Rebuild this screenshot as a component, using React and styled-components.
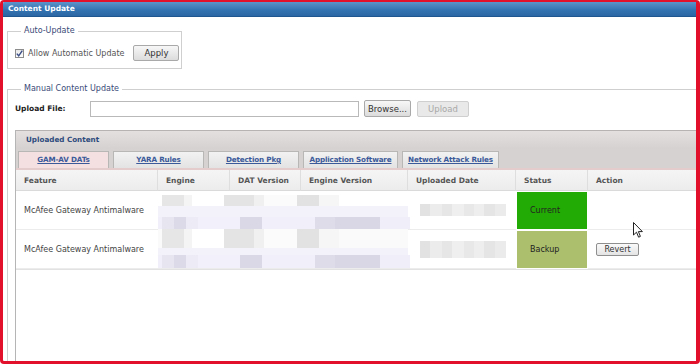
import React from 'react';
import styled, { createGlobalStyle } from 'styled-components';

const GlobalStyle = createGlobalStyle`
  html, body {
    margin: 0;
    padding: 0;
    background: #fff;
  }
  body {
    font-family: "DejaVu Sans", Verdana, sans-serif;
    font-size: 8px;
    color: #444;
  }
`;

const columns = [
  { title: 'Feature', width: 142 },
  { title: 'Engine', width: 72 },
  { title: 'DAT Version', width: 71 },
  { title: 'Engine Version', width: 107 },
  { title: 'Uploaded Date', width: 108 },
  { title: 'Status', width: 72 },
  { title: 'Action', width: 120 },
];

const tabs = ['GAM-AV DATs', 'YARA Rules', 'Detection Pkg', 'Application Software', 'Network Attack Rules'];

const rows = [
  { feature: 'McAfee Gateway Antimalware', status: 'Current', action: null },
  { feature: 'McAfee Gateway Antimalware', status: 'Backup', action: 'Revert' },
];

function Smudge({ top }) {
  return (
    <SmudgeWrap>
      <SmudgeLine $h={top ? 11 : 19} $bg={top ? '#fff' : '#fafafa'}>
        <Pix $w={22} $c="#e6e6e6" $ml={4} />
        <Pix $w={8} $c="#f4f4f4" />
        <Pix $w={32} $c="#fff" />
        <Pix $w={30} $c="#e4e4e4" />
        <Pix $w={10} $c="#f0f0f0" />
        <Pix $w={33} $c="#fbfbfb" />
        <Pix $w={22} $c="#e2e2e2" />
        <Pix $w={20} $c="#f6f6f6" />
      </SmudgeLine>
      <SmudgeLine $h={top ? 11 : 7} $bg="#f3f2fb">
        <Pix $w={250} $c="#f3f2fb" />
      </SmudgeLine>
      <SmudgeLine $h={top ? 12 : 13} $bg="#f1f0fa">
        <Pix $w={12} $c="#e6e5f0" $ml={4} />
        <Pix $w={12} $c="#dcdae8" />
        <Pix $w={12} $c="#ecebf6" />
        <Pix $w={42} $c="#f2f1fb" />
        <Pix $w={22} $c="#dad8e7" />
        <Pix $w={53} $c="#f0effa" />
        <Pix $w={20} $c="#dedce9" />
        <Pix $w={45} $c="#d9d7e6" />
        <Pix $w={30} $c="#efeef9" />
      </SmudgeLine>
    </SmudgeWrap>
  );
}

function DateSmudge({ tall }) {
  return (
    <DateBar $h={tall ? 17 : 12}>
      <Pix $w={10} $c="#e2e2e2" />
      <Pix $w={12} $c="#ececec" />
      <Pix $w={10} $c="#e6e6e6" />
      <Pix $w={12} $c="#efefef" />
      <Pix $w={10} $c="#e8e8e8" />
      <Pix $w={10} $c="#eeeeee" />
      <Pix $w={11} $c="#e5e5e5" />
      <Pix $w={11} $c="#ebebeb" />
    </DateBar>
  );
}

export default function App() {
  return (
    <>
      <GlobalStyle />
      <Frame>
        <TitleBar>Content Update</TitleBar>
        <Body>
          <AutoSet>
            <Legend>Auto-Update</Legend>
            <AutoRow>
              <Check>
                <svg width="9" height="9" viewBox="0 0 9 9">
                  <path d="M1.8 4.6 L3.7 6.8 L7.3 1.6" fill="none" stroke="#3c4f86" strokeWidth="1.4" />
                </svg>
              </Check>
              <span>Allow Automatic Update</span>
              <Button $w={46}>Apply</Button>
            </AutoRow>
          </AutoSet>

          <ManualSet>
            <Legend>Manual Content Update</Legend>
            <UploadRow>
              <Label>Upload File:</Label>
              <FileInput />
              <Button $w={47} $h={17}>Browse...</Button>
              <Button $w={52} $ml={6} disabled>Upload</Button>
            </UploadRow>

            <Panel>
              <PanelHead>Uploaded Content</PanelHead>
              <TabStrip>
                {tabs.map((t, i) => (
                  <Tab key={t} $active={i === 0} $w={i === 3 ? 95 : i === 4 ? 97 : 91}>
                    {t}
                  </Tab>
                ))}
              </TabStrip>
              <TabRule />
              <Grid>
                {columns.map((c) => (
                  <HeadCell key={c.title}>{c.title}</HeadCell>
                ))}
                {rows.map((r, i) => (
                  <React.Fragment key={i}>
                    <Cell>{r.feature}</Cell>
                    <SpanCell>
                      <Smudge top={i === 0} />
                    </SpanCell>
                    <Cell $pad={12}>
                      <DateSmudge tall={i === 1} />
                    </Cell>
                    <StatusCell $status={r.status}>{r.status}</StatusCell>
                    <Cell>{r.action && <SmallButton>{r.action}</SmallButton>}</Cell>
                  </React.Fragment>
                ))}
              </Grid>
            </Panel>
          </ManualSet>
        </Body>
        <Cursor width="11" height="17" viewBox="0 0 11 17">
          <path d="M0.5 0.5 L0.5 13 L3.5 10.2 L5.6 15.2 L7.4 14.4 L5.4 9.6 L9.4 9.6 Z" fill="#fff" stroke="#222" strokeWidth="1" strokeLinejoin="round" />
        </Cursor>
      </Frame>
    </>
  );
}

const Frame = styled.div`
  position: relative;
  width: 700px;
  height: 364px;
  box-sizing: border-box;
  border: 3px solid #e3102b;
  border-top-width: 2px;
  border-right-width: 4px;
  border-radius: 4px;
  overflow: hidden;
  background: #fff;
`;

const TitleBar = styled.div`
  height: 14px;
  line-height: 13px;
  padding-left: 5px;
  background: linear-gradient(#5d93c9, #3474b3 55%, #2a66a3);
  border-bottom: 1px solid #1f5790;
  color: #fff;
  font-weight: bold;
  font-size: 7.5px;
`;

const Body = styled.div`
  padding: 9px 0 0 4px;
`;

const Legend = styled.legend`
  margin-left: 6px;
  padding: 0 3px;
  color: #3a4a78;
  font-size: 8px;
  line-height: 10px;
`;

const AutoSet = styled.fieldset`
  width: 175px;
  height: 43px;
  box-sizing: border-box;
  margin: 0;
  padding: 0 0 0 7px;
  border: 1px solid #cfcfcf;
`;

const AutoRow = styled.div`
  display: flex;
  align-items: center;
  gap: 4px;
  margin-top: 9px;
  color: #555;
`;

const Check = styled.span`
  display: flex;
  width: 9px;
  height: 9px;
  box-sizing: border-box;
  border: 1px solid #8c8c8c;
  background: linear-gradient(#e8e8e8, #fdfdfd);
  svg {
    margin: -1px;
  }
`;

const Button = styled.button`
  width: ${(p) => p.$w}px;
  height: ${(p) => p.$h || 16}px;
  margin-left: ${(p) => p.$ml || 5}px;
  padding: 0;
  box-sizing: border-box;
  border: 1px solid ${(p) => (p.disabled ? '#cfcfcf' : '#a9a9a9')};
  border-radius: 2px;
  background: ${(p) => (p.disabled ? '#e9e9e9' : 'linear-gradient(#f7f7f7, #dcdcdc)')};
  color: ${(p) => (p.disabled ? '#a8a8a8' : '#333')};
  font-family: inherit;
  font-size: 8.5px;
`;

const ManualSet = styled.fieldset`
  margin: 15px -20px 0 0;
  padding: 0 0 0 7px;
  height: 300px;
  border: 1px solid #cfcfcf;
`;

const UploadRow = styled.div`
  display: flex;
  align-items: center;
  margin-top: 6px;
  height: 17px;
`;

const Label = styled.span`
  width: 75px;
  color: #222;
  font-weight: 600;
  font-size: 7.5px;
`;

const FileInput = styled.div`
  width: 269px;
  height: 16px;
  box-sizing: border-box;
  border: 1px solid #b9b9b9;
  background: #fff;
`;

const Panel = styled.div`
  margin-top: 13px;
  min-height: 260px;
  border-left: 1px solid #b5b5b5;
`;

const PanelHead = styled.div`
  height: 18px;
  line-height: 18px;
  padding-left: 10px;
  border-top: 1px solid #b8b3b3;
  background: linear-gradient(#e4e0e0, #d6d1d1);
  color: #2d4b7c;
  font-weight: bold;
  font-size: 7.2px;
`;

const TabStrip = styled.div`
  display: flex;
  gap: 4px;
  padding: 2px 0 0 2px;
  background: #d7d2d2;
`;

const Tab = styled.div`
  width: ${(p) => p.$w}px;
  height: 17px;
  box-sizing: border-box;
  border: 1px solid #b9b6b6;
  border-bottom: none;
  background: ${(p) => (p.$active ? '#f4e0e0' : 'linear-gradient(#f2f2f2, #e3e3e3)')};
  color: #3b5a9a;
  font-weight: bold;
  font-size: 7.2px;
  letter-spacing: -0.15px;
  line-height: 16px;
  text-align: center;
  text-decoration: underline;
  white-space: nowrap;
`;

const TabRule = styled.div`
  height: 2px;
  background: #e5cccc;
`;

const Grid = styled.div`
  display: grid;
  grid-template-columns: ${columns.map((c) => `${c.width}px`).join(' ')};
  grid-auto-rows: 39px;
  grid-template-rows: 21px;
  border-bottom: 1px solid #e2e2e2;
`;

const HeadCell = styled.div`
  display: flex;
  align-items: center;
  padding-left: 8px;
  border-right: 1px solid #dedede;
  border-bottom: 1px solid #dadada;
  background: linear-gradient(#f5f5f5, #ececec);
  color: #555;
  font-weight: bold;
  font-size: 7.5px;
`;

const Cell = styled.div`
  display: flex;
  align-items: center;
  padding-left: ${(p) => p.$pad ?? 8}px;
  border-bottom: 1px solid #ececec;
  color: #444;
`;

const SpanCell = styled.div`
  grid-column: span 3;
  display: flex;
  align-items: flex-end;
  border-bottom: 1px solid #ececec;
`;

const SmudgeWrap = styled.div`
  width: 100%;
  display: flex;
  flex-direction: column;
`;

const SmudgeLine = styled.div`
  display: flex;
  height: ${(p) => p.$h}px;
  background: ${(p) => p.$bg};
`;

const Pix = styled.span`
  flex: none;
  width: ${(p) => p.$w}px;
  margin-left: ${(p) => p.$ml || 0}px;
  background: ${(p) => p.$c};
`;

const DateBar = styled.div`
  display: flex;
  width: 86px;
  height: ${(p) => p.$h}px;
`;

const StatusCell = styled.div`
  display: flex;
  align-items: center;
  padding-left: 13px;
  margin: 1px;
  background: ${(p) => (p.$status === 'Current' ? '#22ab04' : '#acbf6d')};
  color: #222;
`;

const SmallButton = styled.button`
  height: 13px;
  width: 43px;
  padding: 0;
  box-sizing: border-box;
  border: 1px solid #8f8f8f;
  border-radius: 2px;
  background: linear-gradient(#fafafa, #e4e4e4);
  color: #333;
  font-family: inherit;
  font-size: 8px;
`;

const Cursor = styled.svg`
  position: absolute;
  left: 630px;
  top: 220px;
`;
